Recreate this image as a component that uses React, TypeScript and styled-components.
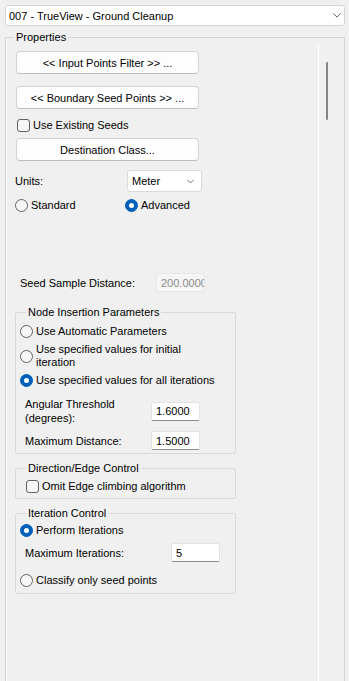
import styled, { createGlobalStyle } from "styled-components";

const Global = createGlobalStyle`
  html, body {
    margin: 0;
    padding: 0;
    background: #f0f0f0;
  }
  body {
    font-family: "Liberation Sans", Arial, sans-serif;
    font-size: 11px;
    color: #000;
  }
  * {
    box-sizing: border-box;
  }
`;

const Page = styled.div`
  width: 349px;
  height: 681px;
  overflow: hidden;
  padding: 5px 4px 0 5px;
  background: #f0f0f0;
`;

const Combo = styled.div`
  height: 21px;
  display: flex;
  align-items: center;
  justify-content: space-between;
  padding: 0 3px 0 3px;
  background: #ffffff;
  border: 1px solid #d6d6d6;
  border-radius: 3px;
  line-height: 14px;
`;

const Chevron = ({ w = 8 }: { w?: number }) => (
  <svg width={w} height={5} viewBox="0 0 8 5" style={{ display: "block" }}>
    <polyline points="0.5,0.5 4,4.2 7.5,0.5" fill="none" stroke="#606060" strokeWidth="1" />
  </svg>
);

const Properties = styled.fieldset`
  margin: 4px 0 0 0;
  padding: 0;
  min-width: 0;
  height: 700px;
  border: 1px solid #d4d4d4;
  box-shadow: inset 1px 0 0 #fafafa;
`;

const Caption = styled.legend<{ $ml: number }>`
  margin-left: ${(p) => p.$ml}px;
  padding: 0 2px;
  line-height: 14px;
  font-size: 11px;
`;

const PropsBody = styled.div`
  display: flex;
  height: 100%;
`;

const Content = styled.div`
  flex: 1;
  padding: 7px 0 0 10px;
  display: flex;
  flex-direction: column;
  align-items: flex-start;
`;

const Track = styled.div`
  width: 26px;
  border-left: 1px solid #ffffff;
  padding: 18px 0 0 7px;
`;

const Thumb = styled.div`
  width: 2px;
  height: 58px;
  border-radius: 1px;
  background: #858585;
`;

const Button = styled.div<{ $mt: number }>`
  margin-top: ${(p) => p.$mt}px;
  width: 183px;
  height: 23px;
  display: flex;
  align-items: center;
  justify-content: center;
  background: #fdfdfd;
  border: 1px solid #d3d3d3;
  border-bottom-color: #bdbdbd;
  border-radius: 4px;
`;

const Row = styled.div<{ $mt: number; $ml?: number }>`
  margin-top: ${(p) => p.$mt}px;
  margin-left: ${(p) => p.$ml ?? 0}px;
  display: flex;
  align-items: center;
  line-height: 14px;
  min-height: 14px;
`;

const Cell = styled.div<{ $w: number }>`
  width: ${(p) => p.$w}px;
  display: flex;
  align-items: center;
  gap: 3px;
`;

const Option = styled.div`
  display: flex;
  align-items: center;
  gap: 3px;
`;

const Radio = styled.span<{ $on?: boolean }>`
  flex: none;
  width: 13px;
  height: 13px;
  border-radius: 50%;
  display: flex;
  align-items: center;
  justify-content: center;
  background: ${(p) => (p.$on ? "#005fb8" : "#f6f6f6")};
  border: 1px solid ${(p) => (p.$on ? "#005fb8" : "#626262")};
  &::after {
    content: "";
    display: ${(p) => (p.$on ? "block" : "none")};
    width: 5px;
    height: 5px;
    border-radius: 50%;
    background: #ffffff;
  }
`;

const Check = styled.span`
  flex: none;
  width: 13px;
  height: 13px;
  border-radius: 3px;
  background: #f6f6f6;
  border: 1px solid #626262;
`;

const TwoLine = styled.span<{ $lh: number }>`
  line-height: ${(p) => p.$lh}px;
`;

const Select = styled.div`
  width: 75px;
  height: 22px;
  display: flex;
  align-items: center;
  justify-content: space-between;
  padding: 0 7px 0 4px;
  background: #ffffff;
  border: 1px solid #dadada;
  border-radius: 3px;
`;

const Field = styled.div<{ $disabled?: boolean }>`
  width: 49px;
  height: 19px;
  display: flex;
  align-items: center;
  padding-left: 4px;
  overflow: hidden;
  white-space: nowrap;
  background: ${(p) => (p.$disabled ? "#f6f6f6" : "#ffffff")};
  border: 1px solid ${(p) => (p.$disabled ? "#e6e6e6" : "#e3e3e3")};
  border-bottom-color: ${(p) => (p.$disabled ? "#e6e6e6" : "#8c8c8c")};
  border-radius: 2px;
  color: ${(p) => (p.$disabled ? "#8a8a8a" : "#000")};
`;

const Group = styled.fieldset<{ $mt: number; $pt: number; $pb: number }>`
  margin: ${(p) => p.$mt}px 0 0 -1px;
  width: 221px;
  min-width: 0;
  padding: ${(p) => p.$pt}px 4px ${(p) => p.$pb}px 4px;
  border: 1px solid #d9d9d9;
  border-radius: 2px;
  display: flex;
  flex-direction: column;
  align-items: flex-start;
`;

export default function App() {
  return (
    <>
      <Global />
      <Page>
        <Combo>
          <span>007 - TrueView - Ground Cleanup</span>
          <Chevron />
        </Combo>
        <Properties>
          <Caption $ml={8}>Properties</Caption>
          <PropsBody>
            <Content>
              <Button $mt={0}>&lt;&lt; Input Points Filter &gt;&gt; ...</Button>
              <Button $mt={12}>&lt;&lt; Boundary Seed Points &gt;&gt; ...</Button>
              <Row $mt={9} $ml={1}>
                <Option>
                  <Check />
                  <span>Use Existing Seeds</span>
                </Option>
              </Row>
              <Button $mt={6}>Destination Class...</Button>
              <Row $mt={9} $ml={-1}>
                <Cell $w={112}>Units:</Cell>
                <Select>
                  <span>Meter</span>
                  <Chevron w={7} />
                </Select>
              </Row>
              <Row $mt={6} $ml={-1}>
                <Cell $w={110}>
                  <Radio />
                  <span>Standard</span>
                </Cell>
                <Option>
                  <Radio $on />
                  <span>Advanced</span>
                </Option>
              </Row>
              <Row $mt={61} $ml={4}>
                <Cell $w={136}>Seed Sample Distance:</Cell>
                <Field $disabled>200.0000</Field>
              </Row>

              <Group $mt={13} $pt={5} $pb={3}>
                <Caption $ml={6}>Node Insertion Parameters</Caption>
                <Row $mt={0}>
                  <Option>
                    <Radio />
                    <span>Use Automatic Parameters</span>
                  </Option>
                </Row>
                <Row $mt={5}>
                  <Option>
                    <Radio />
                    <TwoLine $lh={13}>
                      Use specified values for initial
                      <br />
                      iteration
                    </TwoLine>
                  </Option>
                </Row>
                <Row $mt={4}>
                  <Option>
                    <Radio $on />
                    <span>Use specified values for all iterations</span>
                  </Option>
                </Row>
                <Row $mt={10} $ml={5}>
                  <Cell $w={126}>
                    <TwoLine $lh={14}>
                      Angular Threshold
                      <br />
                      (degrees):
                    </TwoLine>
                  </Cell>
                  <Field>1.6000</Field>
                </Row>
                <Row $mt={6} $ml={5}>
                  <Cell $w={126}>Maximum Distance:</Cell>
                  <Field>1.5000</Field>
                </Row>
              </Group>

              <Group $mt={7} $pt={4} $pb={5}>
                <Caption $ml={6}>Direction/Edge Control</Caption>
                <Row $mt={0} $ml={6}>
                  <Option>
                    <Check />
                    <span>Omit Edge climbing algorithm</span>
                  </Option>
                </Row>
              </Group>

              <Group $mt={7} $pt={3} $pb={6}>
                <Caption $ml={6}>Iteration Control</Caption>
                <Row $mt={0}>
                  <Option>
                    <Radio $on />
                    <span>Perform Iterations</span>
                  </Option>
                </Row>
                <Row $mt={6} $ml={5}>
                  <Cell $w={146}>Maximum Iterations:</Cell>
                  <Field>5</Field>
                </Row>
                <Row $mt={11}>
                  <Option>
                    <Radio />
                    <span>Classify only seed points</span>
                  </Option>
                </Row>
              </Group>
            </Content>
            <Track>
              <Thumb />
            </Track>
          </PropsBody>
        </Properties>
      </Page>
    </>
  );
}
